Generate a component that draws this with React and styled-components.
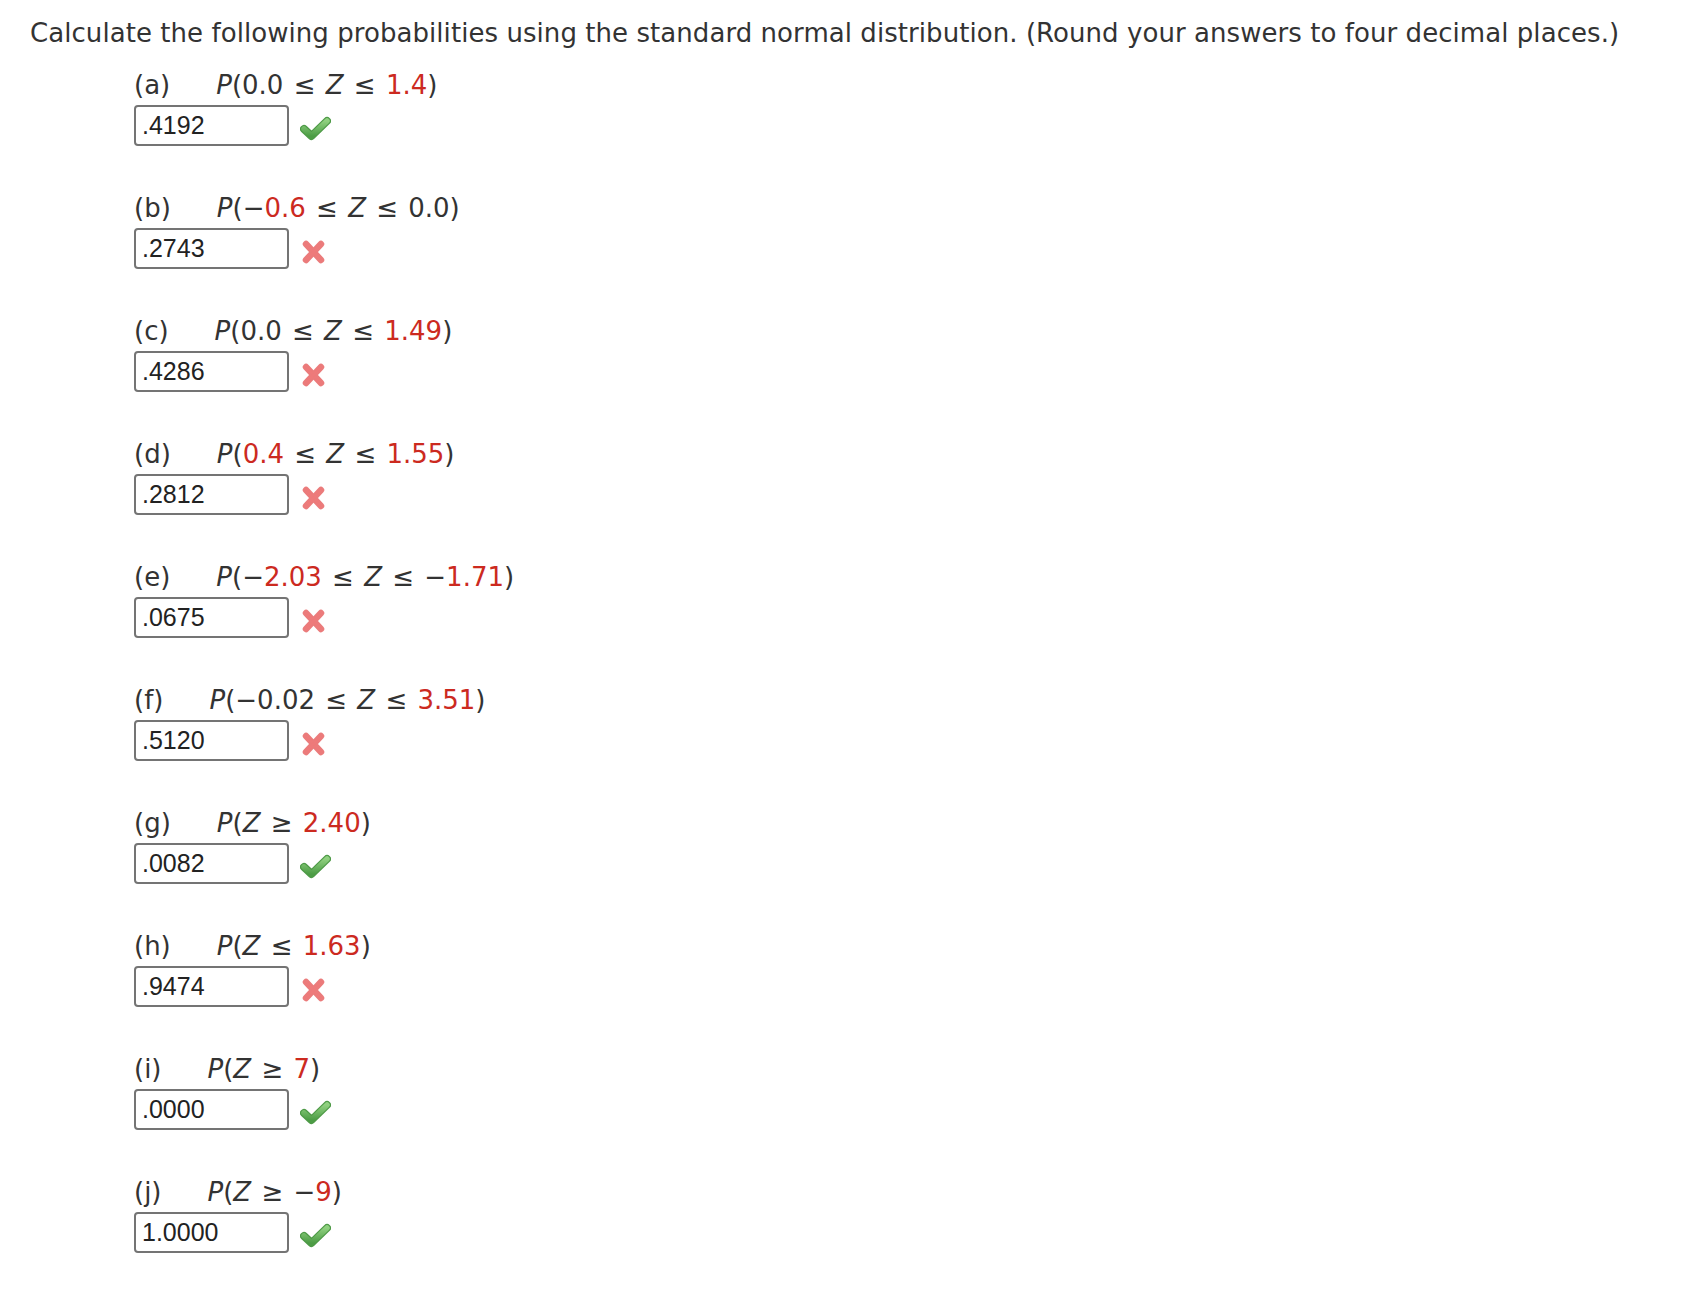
import React from 'react';
import styled, { createGlobalStyle } from 'styled-components';

const Global = createGlobalStyle`
  html, body {
    margin: 0;
    padding: 0;
    background: #fff;
  }
`;

const Page = styled.div`
  padding: 15px 0 0 30px;
  font-family: "DejaVu Sans", Verdana, sans-serif;
  color: #333;
`;

const Title = styled.div`
  font-size: 26px;
  line-height: 36px;
  letter-spacing: 0.06px;
  white-space: nowrap;
`;

const List = styled.div`
  margin-top: 18px;
  padding-left: 104px;
  display: flex;
  flex-direction: column;
`;

const Row = styled.div`
  display: flex;
  flex-direction: column;
  padding-bottom: 46px;
`;

const Question = styled.div`
  display: flex;
  align-items: center;
  font-size: 26px;
  line-height: 32px;
  white-space: nowrap;
`;

const Letter = styled.span`
  margin-right: ${props => props.gap}px;
`;

const Expr = styled.span`
  word-spacing: 2px;
`;

const I = styled.i`
  font-style: italic;
`;

const Red = styled.span`
  color: #cc2a1f;
`;

const AnswerLine = styled.div`
  display: flex;
  align-items: center;
  margin-top: 4px;
  gap: 11px;
`;

const Box = styled.div`
  box-sizing: border-box;
  width: 155px;
  height: 41px;
  border: 2px solid #747474;
  border-radius: 4px;
  padding: 0 6px;
  font-family: "Liberation Sans", Arial, sans-serif;
  font-size: 25px;
  line-height: 37px;
  color: #222;
`;

const Mark = styled.span`
  display: flex;
  margin-top: ${props => props.offset}px;
`;

const Check = () => (
  <svg width="31" height="25" viewBox="0 0 31 25">
    <defs>
      <linearGradient id="cg" x1="0" y1="0" x2="0" y2="1">
        <stop offset="0" stopColor="#8fd07f" />
        <stop offset="1" stopColor="#4c9c45" />
      </linearGradient>
    </defs>
    <path
      d="M4 13 L11.5 20 L27 5"
      fill="none"
      stroke="#4e9a47"
      strokeWidth="8"
      strokeLinecap="round"
      strokeLinejoin="round"
    />
    <path
      d="M4 13 L11.5 20 L27 5"
      fill="none"
      stroke="url(#cg)"
      strokeWidth="5.5"
      strokeLinecap="round"
      strokeLinejoin="round"
    />
  </svg>
);

const Cross = () => (
  <svg width="27" height="28" viewBox="0 0 27 28">
    <g stroke="#e86464" strokeWidth="6.5" strokeLinecap="round" opacity="0.85">
      <path d="M6 6 L21 22" />
      <path d="M21 6 L6 22" />
    </g>
    <g stroke="#ee7a7a" strokeWidth="2.5" strokeLinecap="round">
      <path d="M7 7 L20 21" />
      <path d="M20 7 L7 21" />
    </g>
  </svg>
);

const le = '≤';
const ge = '≥';
const mi = '−';

const items = [
  { l: '(a)', gap: 46, e: <><I>P</I>(0.0 {le} <I>Z</I> {le} <Red>1.4</Red>)</>, v: '.4192', ok: true },
  { l: '(b)', gap: 46, e: <><I>P</I>({mi}<Red>0.6</Red> {le} <I>Z</I> {le} 0.0)</>, v: '.2743', ok: false },
  { l: '(c)', gap: 46, e: <><I>P</I>(0.0 {le} <I>Z</I> {le} <Red>1.49</Red>)</>, v: '.4286', ok: false },
  { l: '(d)', gap: 46, e: <><I>P</I>(<Red>0.4</Red> {le} <I>Z</I> {le} <Red>1.55</Red>)</>, v: '.2812', ok: false },
  { l: '(e)', gap: 46, e: <><I>P</I>({mi}<Red>2.03</Red> {le} <I>Z</I> {le} {mi}<Red>1.71</Red>)</>, v: '.0675', ok: false },
  { l: '(f)', gap: 46, e: <><I>P</I>({mi}0.02 {le} <I>Z</I> {le} <Red>3.51</Red>)</>, v: '.5120', ok: false },
  { l: '(g)', gap: 46, e: <><I>P</I>(<I>Z</I> {ge} <Red>2.40</Red>)</>, v: '.0082', ok: true },
  { l: '(h)', gap: 46, e: <><I>P</I>(<I>Z</I> {le} <Red>1.63</Red>)</>, v: '.9474', ok: false },
  { l: '(i)', gap: 46, e: <><I>P</I>(<I>Z</I> {ge} <Red>7</Red>)</>, v: '.0000', ok: true },
  { l: '(j)', gap: 46, e: <><I>P</I>(<I>Z</I> {ge} {mi}<Red>9</Red>)</>, v: '1.0000', ok: true },
];

export default function App() {
  return (
    <Page>
      <Global />
      <Title>
        Calculate the following probabilities using the standard normal distribution. (Round your answers to four decimal places.)
      </Title>
      <List>
        {items.map(it => (
          <Row key={it.l}>
            <Question>
              <Letter gap={it.gap}>{it.l}</Letter>
              <Expr>{it.e}</Expr>
            </Question>
            <AnswerLine>
              <Box>{it.v}</Box>
              {it.ok ? (
                <Mark offset={5}><Check /></Mark>
              ) : (
                <Mark offset={6}><Cross /></Mark>
              )}
            </AnswerLine>
          </Row>
        ))}
      </List>
    </Page>
  );
}
